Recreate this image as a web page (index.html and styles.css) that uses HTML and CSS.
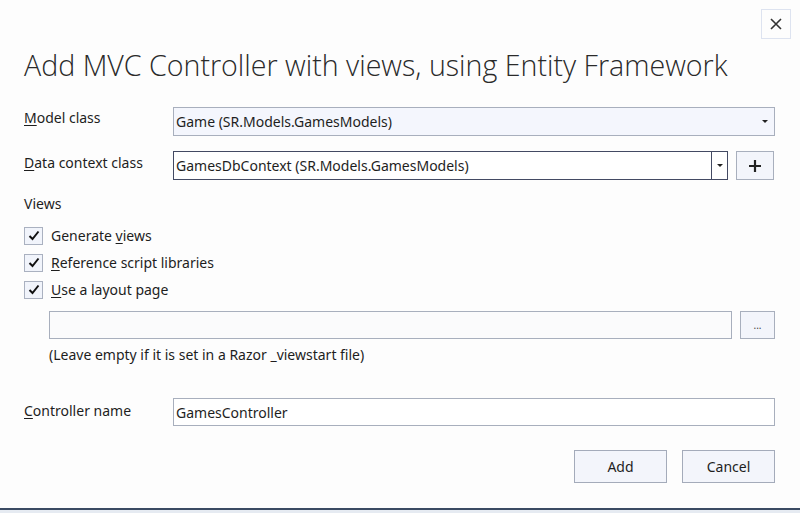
FILE: index.html
```html
<!DOCTYPE html>
<html>
<head>
<meta charset="utf-8">
<link rel="stylesheet" href="styles.css">
</head>
<body>
<div class="dialog">
  <div class="topbar">
    <button class="close" aria-label="Close">
      <svg width="12" height="12" viewBox="0 0 12 12"><path d="M1 1 L11 11 M11 1 L1 11" stroke="#333" stroke-width="1.6" fill="none"/></svg>
    </button>
  </div>
  <h1 class="title">Add MVC Controller with views, using Entity Framework</h1>

  <div class="row row-model">
    <label class="label"><u>M</u>odel class</label>
    <div class="combo combo-model">
      <span class="combo-text">Game (SR.Models.GamesModels)</span>
      <span class="arrow"></span>
    </div>
  </div>

  <div class="row row-data">
    <label class="label"><u>D</u>ata context class</label>
    <div class="combo combo-data">
      <span class="combo-text">GamesDbContext (SR.Models.GamesModels)</span>
      <span class="arrow-box"><span class="arrow"></span></span>
    </div>
    <button class="plus">
      <svg width="14" height="14" viewBox="0 0 14 14"><path d="M7 1 V13 M1 7 H13" stroke="#222" stroke-width="2.2" fill="none"/></svg>
    </button>
  </div>

  <div class="views-label">Views</div>

  <div class="checks">
    <div class="check"><span class="box"><svg width="12" height="11" viewBox="0 0 12 11"><path d="M1.5 6 L4.5 9 L10.5 1.5" stroke="#111" stroke-width="2" fill="none"/></svg></span><span>Generate <u>v</u>iews</span></div>
    <div class="check"><span class="box"><svg width="12" height="11" viewBox="0 0 12 11"><path d="M1.5 6 L4.5 9 L10.5 1.5" stroke="#111" stroke-width="2" fill="none"/></svg></span><span><u>R</u>eference script libraries</span></div>
    <div class="check"><span class="box"><svg width="12" height="11" viewBox="0 0 12 11"><path d="M1.5 6 L4.5 9 L10.5 1.5" stroke="#111" stroke-width="2" fill="none"/></svg></span><span><u>U</u>se a layout page</span></div>
  </div>

  <div class="layout-row">
    <div class="input layout-input"></div>
    <button class="browse">...</button>
  </div>
  <div class="hint">(Leave empty if it is set in a Razor _viewstart file)</div>

  <div class="row row-ctrl">
    <label class="label"><u>C</u>ontroller name</label>
    <div class="input ctrl-input">GamesController</div>
  </div>

  <div class="actions">
    <button class="btn">Add</button>
    <button class="btn">Cancel</button>
  </div>
</div>
<div class="footer"></div>
</body>
</html>
```

FILE: styles.css
```css
* { box-sizing: border-box; }
html, body { margin: 0; padding: 0; }
body {
  width: 800px;
  height: 513px;
  background: #fdfdfd;
  font-family: "Noto Sans", "Open Sans", sans-serif;
  font-size: 14px;
  color: #1e1e1e;
  overflow: hidden;
  position: relative;
}
u { text-decoration: underline; text-underline-offset: 2px; }
button { font-family: inherit; font-size: 14px; color: #1e1e1e; margin: 0; padding: 0; }
.dialog {
  height: 508px;
  padding: 9px 25px 0 24px;
  display: flex;
  flex-direction: column;
}
.topbar { display: flex; justify-content: flex-end; margin-right: -16px; height: 30px; }
.close {
  width: 30px; height: 30px;
  background: #fdfdfd;
  border: 1px solid #dde3f0;
  display: flex; align-items: center; justify-content: center;
}
.title {
  margin: 6px 0 0 0;
  font-family: "Open Sans", sans-serif;
  font-weight: 300;
  font-size: 28.6px;
  line-height: 40px;
  color: #2a2a2a;
  white-space: nowrap;
}
.row { display: flex; align-items: flex-start; }
.label { width: 149px; flex: none; line-height: 20px; padding-top: 1px; }
.row-model { margin-top: 22px; }
.row-data { margin-top: 15px; }
.row-data .label { padding-top: 2px; }
.combo {
  height: 29px;
  display: flex;
  align-items: center;
  border: 1px solid #a8afbd;
  position: relative;
}
.combo-text { flex: 1; padding-left: 2px; }
.combo-model { flex: 1; background: #f4f6fd; }
.combo-model .arrow { margin-right: 6px; }
.arrow {
  width: 0; height: 0;
  border-left: 3px solid transparent;
  border-right: 3px solid transparent;
  border-top: 3px solid #222;
}
.combo-data { width: 555px; background: #fff; border-color: #434a63; }
.arrow-box {
  width: 16px; height: 100%;
  border-left: 1px solid #434a63;
  display: flex; align-items: center; justify-content: center;
}
.plus {
  width: 38px; height: 29px; margin-left: 8px;
  background: #f3f5fb;
  border: 1px solid #a8afbd;
  display: flex; align-items: center; justify-content: center;
}
.views-label { margin-top: 14px; line-height: 20px; }
.checks { margin-top: 12px; display: flex; flex-direction: column; gap: 8px; }
.check { display: flex; align-items: center; height: 19px; }
.box {
  width: 19px; height: 18px;
  border: 1px solid #aab1c0;
  background: #f1f4fb;
  display: flex; align-items: center; justify-content: center;
  margin-right: 8px;
}
.layout-row { display: flex; margin-top: 12px; margin-left: 25px; }
.input {
  height: 28px;
  border: 1px solid #a8afbd;
  background: #fff;
  display: flex; align-items: center;
  padding-left: 2px;
}
.layout-input { width: 684px; background: #fbfbfc; }
.browse {
  width: 35px; height: 28px; margin-left: 8px;
  background: #f3f5fb;
  border: 1px solid #a8afbd;
  font-size: 10px;
  line-height: 1;
  color: #444;
}
.hint { margin-left: 25px; margin-top: 6px; line-height: 20px; }
.row-ctrl { margin-top: 33px; }
.row-ctrl .label { padding-top: 3px; }
.ctrl-input { flex: 1; height: 28px; }
.actions { display: flex; justify-content: flex-end; gap: 15px; margin-top: 24px; }
.btn {
  width: 93px; height: 33px;
  background: #f3f5fb;
  border: 1px solid #a4abba;
}
.footer {
  position: absolute; left: 0; right: 0; bottom: 0;
  height: 5px;
  border-top: 2px solid #3b4a63;
  background: #e6ebf2;
}
```
